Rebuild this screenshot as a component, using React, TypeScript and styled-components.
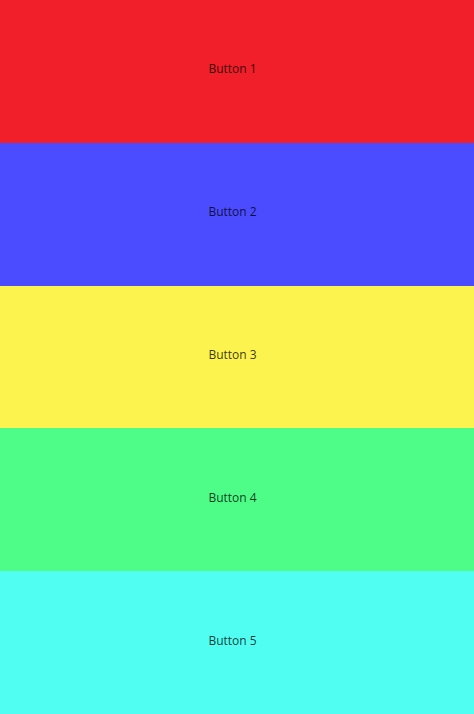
import styled, { createGlobalStyle } from 'styled-components'

const buttons = [
	{ label: 'Button 1', color: '#f01f2a' },
	{ label: 'Button 2', color: '#4b4bff' },
	{ label: 'Button 3', color: '#fdf34f' },
	{ label: 'Button 4', color: '#4efd87' },
	{ label: 'Button 5', color: '#50fff1' },
]

export default function App() {
	return (
		<>
			<GlobalStyle />
			<Stack>
				{buttons.map((b) => (
					<ColorButton key={b.label} $bg={b.color}>
						{b.label}
					</ColorButton>
				))}
			</Stack>
		</>
	)
}

const GlobalStyle = createGlobalStyle`
	html, body, #root {
		margin: 0;
		padding: 0;
		height: 100%;
	}
	body {
		font-family: 'Open Sans', 'Noto Sans', sans-serif;
	}
`

const Stack = styled.div`
	height: 100vh;
	display: flex;
	flex-direction: column;
`

const ColorButton = styled.button<{ $bg: string }>`
	flex: 1;
	border: none;
	margin: 0;
	padding: 0 9px 5px 0;
	background-color: ${(p) => p.$bg};
	color: rgba(0, 0, 0, 0.78);
	font-family: 'Open Sans', 'Noto Sans', sans-serif;
	font-size: 12px;
	font-weight: 500;
	cursor: pointer;
`
